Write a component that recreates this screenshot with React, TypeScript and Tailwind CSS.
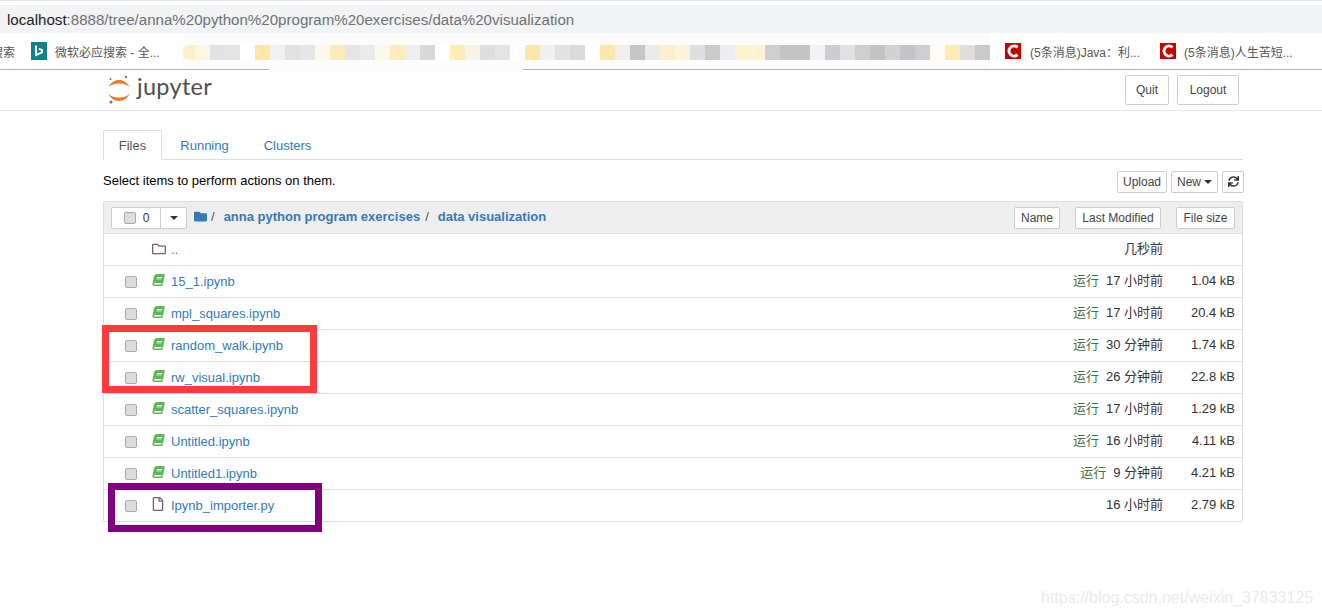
import { FaBook, FaFolder, FaRegFile, FaRegFolder, FaSync } from "react-icons/fa";

const sans = "font-['Liberation_Sans','Noto_Sans_CJK_SC',sans-serif]";

const mosaic = [
  "#fdf6e0", "#e2e2e2", "#e4e4e6", "#ffffff", "#fbe6a6", "#f2f1ef", "#e2e2e5", "#e6e6e6", "#fdf8ea", "#fceabb", "#e8e4e5",
  "#e8eaec", "#fdf8ec", "#fcecbd", "#eeeeec", "#d9d8d6", "#ffffff", "#fcecb8", "#f6f4e8", "#dedee0", "#e4e4e6", "#ffffff",
  "#fbe7a8", "#f0f0f0", "#e2e2e2", "#dadada", "#ffffff", "#fbe6ab", "#f1eeeb", "#c6c6c6", "#e9ebea", "#feefca", "#fdf3da",
  "#e0dfdd", "#cbc9ca", "#ecedf0", "#fdf3d3", "#fdf3d3", "#cfcfcd", "#c3c4c6", "#c3c5c4", "#f2f3f6", "#cbcdd0", "#e1e1e1",
  "#d0cecf", "#c3c4c0", "#d0d2d4", "#c3c4c6", "#cdced2", "#fefbf3", "#fbebb5", "#dfdedc", "#c8c9cb",
];

const rows = [
  { name: "15_1.ipynb", run: true, time: "17 小时前", size: "1.04 kB" },
  { name: "mpl_squares.ipynb", run: true, time: "17 小时前", size: "20.4 kB" },
  { name: "random_walk.ipynb", run: true, time: "30 分钟前", size: "1.74 kB" },
  { name: "rw_visual.ipynb", run: true, time: "26 分钟前", size: "22.8 kB" },
  { name: "scatter_squares.ipynb", run: true, time: "17 小时前", size: "1.29 kB" },
  { name: "Untitled.ipynb", run: true, time: "16 小时前", size: "4.11 kB" },
  { name: "Untitled1.ipynb", run: true, time: "9 分钟前", size: "4.21 kB" },
  { name: "Ipynb_importer.py", run: false, time: "16 小时前", size: "2.79 kB" },
];

function Check() {
  return <span className="block h-[12px] w-[12px] rounded-[2px] border border-[#a9a9a9] bg-[#dcdcdc]" />;
}

function Csdn() {
  return (
    <svg width="16" height="16" viewBox="0 0 16 16" className="shrink-0">
      <rect width="16" height="16" fill="#c90000" />
      <path d="M12.5 4.4 A5 5 0 1 0 12.5 11.6" fill="none" stroke="#fff" strokeWidth="3" />
    </svg>
  );
}

function SmallButton({ children, className = "" }: { children: React.ReactNode; className?: string }) {
  return (
    <div className={`flex items-center justify-center rounded-[2px] border border-[#cccccc] bg-white text-[12px] text-[#444] ${className}`}>
      {children}
    </div>
  );
}

export default function App() {
  return (
    <div className={`relative h-[615px] w-[1322px] overflow-hidden bg-white text-[13px] text-[#000] ${sans}`}>
      <div className="h-[1px] bg-[#dfe2e7]" />
      <div className="h-[4px]" />
      <div className="flex h-[28px] items-center bg-[#f1f3f4] pl-[7px] pt-[2px] text-[15.1px] text-[#6f7275]">
        <span className="text-[#202124]">localhost</span>:8888/tree/anna%20python%20program%20exercises/data%20visualization
      </div>
      <div className="box-content flex h-[36px] items-center border-b border-[#b0b0b0] text-[12px] text-[#555]">
        <div className="flex h-[36px] w-[1005px] shrink-0 items-center">
          <span className="mt-[3px] block w-[15px] shrink-0 overflow-hidden whitespace-nowrap">
            <span className="-ml-[9px] inline-block">搜索</span>
          </span>
          <svg width="16" height="18" viewBox="0 0 16 18" className="ml-[16px] shrink-0">
            <rect width="16" height="18" fill="#0f8387" />
            <path d="M5 3.5V13l6-2.6V8L7.8 6.9" fill="none" stroke="#fff" strokeWidth="2" />
          </svg>
          <span className="ml-[8px] mt-[3px] w-[128px] shrink-0 whitespace-nowrap">微软必应搜索 - 全...</span>
          <div className="flex h-[36px] w-[807px] shrink-0 items-center bg-[#fcfcfc] pt-[3px]">
            <span className="block h-[15px] w-[12px] rounded-l-[6px] bg-[#fdf0c8]" />
            {mosaic.map((c, i) => (
              <span key={i} className="block h-[15px] w-[15px]" style={{ backgroundColor: c }} />
            ))}
          </div>
        </div>
        <Csdn />
        <span className="ml-[9px] mt-[3px] w-[130px] shrink-0 whitespace-nowrap">(5条消息)Java：利...</span>
        <Csdn />
        <span className="ml-[8px] mt-[3px] whitespace-nowrap">(5条消息)人生苦短...</span>
      </div>

      <header className="flex h-[41px] items-center border-b border-[#e7e7e7] pl-[108px] pr-[83px]">
        <svg width="22" height="30" viewBox="0 0 22 30" className="-mt-[2px] shrink-0">
          <path d="M0.5 13 C5 3.7 17 3.7 21.5 13 C17 8.3 5 8.3 0.5 13Z" fill="#f37726" />
          <path d="M0.5 20 C5 29.3 17 29.3 21.5 20 C17 24.7 5 24.7 0.5 20Z" fill="#f37726" />
          <circle cx="18" cy="3" r="1.2" fill="#767677" />
          <circle cx="2.5" cy="5" r="1" fill="#767677" />
          <circle cx="3" cy="28" r="1.5" fill="#767677" />
        </svg>
        <span className="-mt-[6px] ml-[7px] font-['Lato',sans-serif] text-[23.5px] leading-none tracking-[0.3px] text-[#4e4e4e]">jupyter</span>
        <div className="ml-auto flex gap-[8px]">
          <SmallButton className="h-[30px] w-[44px]">Quit</SmallButton>
          <SmallButton className="h-[30px] w-[62px]">Logout</SmallButton>
        </div>
      </header>

      <main className="ml-[103px] w-[1140px] pt-[19px]">
        <nav className="flex h-[30px] border-b border-[#dddddd]">
          <div className="flex h-[30px] w-[59px] items-center justify-center rounded-t-[2px] border border-[#dddddd] border-b-white bg-white pt-[2px] text-[#555]">Files</div>
          <div className="flex h-[29px] w-[85px] items-center justify-center pt-[2px] text-[#337ab7]">Running</div>
          <div className="flex h-[29px] w-[81px] items-center justify-center pt-[2px] text-[#337ab7]">Clusters</div>
        </nav>

        <div className="flex h-[41px] items-center">
          <span className="mt-[1px] text-[13px]">Select items to perform actions on them.</span>
          <div className="ml-auto -mr-[1px] mt-[2px] flex gap-[4px]">
            <SmallButton className="h-[22px] w-[50px]">Upload</SmallButton>
            <SmallButton className="h-[22px] w-[47px] gap-[3px]">
              New<span className="block h-0 w-0 border-x-[4px] border-t-[4px] border-x-transparent border-t-[#333]" />
            </SmallButton>
            <SmallButton className="h-[22px] w-[22px]"><FaSync className="h-[11px] w-[11px] text-[#333]" /></SmallButton>
          </div>
        </div>

        <section className="rounded-[2px] border border-[#dddddd]">
          <div className="flex h-[32px] items-center border-b border-[#dddddd] bg-[#eeeeee] pl-[7px] pr-[7px]">
            <div className="flex h-[22px] w-[76px] rounded-[2px] border border-[#cccccc] bg-white text-[12px] text-[#333]">
              <div className="flex w-[49px] items-center justify-center gap-[7px] border-r border-[#cccccc] pl-[1px]">
                <Check /><span>0</span>
              </div>
              <div className="flex flex-1 items-center justify-center">
                <span className="block h-0 w-0 border-x-[4px] border-t-[4px] border-x-transparent border-t-[#333]" />
              </div>
            </div>
            <FaFolder className="ml-[7px] -mt-[2px] h-[13px] w-[13px] text-[#337ab7]" />
            <span className="-mt-[2px] ml-[4px] text-[#555]">/</span>
            <a className="-mt-[2px] ml-[9px] font-bold text-[#337ab7]">anna python program exercises</a>
            <span className="-mt-[2px] ml-[5px] text-[#555]">/</span>
            <a className="-mt-[2px] ml-[9px] font-bold text-[#337ab7]">data visualization</a>
            <div className="ml-auto flex gap-[15px]">
              <SmallButton className="h-[22px] w-[46px]">Name</SmallButton>
              <SmallButton className="h-[22px] w-[86px]">Last Modified</SmallButton>
              <SmallButton className="h-[22px] w-[59px]">File size</SmallButton>
            </div>
          </div>

          <div className="flex h-[32px] items-center border-b border-[#dddddd]">
            <FaRegFolder className="ml-[48px] -mt-[2px] h-[14px] w-[14px] text-[#7a5c7a]" />
            <span className="ml-[5px] text-[#337ab7]">..</span>
            <span className="ml-auto mr-[79px] -mt-[2px] text-[#333]">几秒前</span>
          </div>

          {rows.map((r, i) => (
            <div
              key={r.name}
              className={`flex items-center ${i < rows.length - 1 ? "h-[32px] border-b border-[#dddddd]" : "h-[31px]"}`}
            >
              <span className="ml-[21px] mt-[1px]"><Check /></span>
              <span className="ml-[14px] -mt-[3px] flex w-[14px] justify-center">
                {r.run ? (
                  <FaBook className="h-[12px] w-[13px] -skew-x-12 text-[#5cb85c]" />
                ) : (
                  <FaRegFile className="h-[14px] w-[12px] text-[#7a5c7a]" />
                )}
              </span>
              <span className="ml-[6px] mt-[1px] text-[#337ab7]">{r.name}</span>
              <span className="-mt-[1px] ml-auto flex items-center gap-[7px] text-[#333]">
                {r.run && <span className="text-[#3c763d]">运行</span>}
                <span>{r.time}</span>
              </span>
              <span className="-mt-[1px] mr-[7px] w-[72px] text-right text-[#333]">{r.size}</span>
            </div>
          ))}
        </section>
      </main>

      <div className="absolute left-[269px] top-[68px] h-[3px] w-[254px] bg-[#fcfcfc]" />
      <div className="absolute left-[102px] top-[325px] h-[68px] w-[215px] border-[7px] border-[#ff3b3b]" />
      <div className="absolute left-[108px] top-[483px] h-[49px] w-[214px] border-[7px] border-[#800080]" />
      <div className="absolute left-[1041px] top-[586px] whitespace-nowrap text-[16px] text-[#eaeaea]">https://blog.csdn.net/weixin_37833125</div>
    </div>
  );
}
